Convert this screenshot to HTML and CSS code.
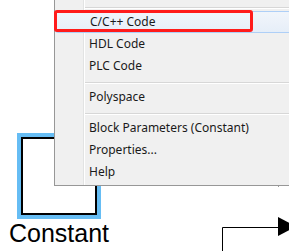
FILE: index.html
```html
<!DOCTYPE html>
<html lang="en">
<head>
  <meta charset="UTF-8">
  <title>Context menu</title>
  <link rel="stylesheet" href="styles.css">
</head>
<body>
  <div class="canvas">
    <div class="block">
      <div class="block-face"></div>
    </div>
    <div class="block-label">Constant</div>

    <svg class="wires" width="289" height="251" viewBox="0 0 289 251">
      <path d="M222.5 251 V227.5 H279" fill="none" stroke="#000" stroke-width="1"/>
      <polygon points="278,217 296,226.5 278,236" fill="#000"/>
      <rect x="278" y="185" width="1" height="2" fill="#9a9a9a"/>
    </svg>

    <div class="menu">
      <div class="sep"></div>
      <div class="item active">C/C++ Code</div>
      <div class="item">HDL Code</div>
      <div class="item">PLC Code</div>
      <div class="sep"></div>
      <div class="item">Polyspace</div>
      <div class="sep"></div>
      <div class="item">Block Parameters (Constant)</div>
      <div class="item">Properties...</div>
      <div class="item">Help</div>
    </div>

    <div class="mark"></div>
  </div>
</body>
</html>
```

FILE: styles.css
```css
body {
  margin: 0;
  background: #fff;
  font-family: "Noto Sans", "Open Sans", sans-serif;
}

.canvas {
  position: relative;
  width: 289px;
  height: 251px;
  overflow: hidden;
}

.block {
  position: absolute;
  left: 17px;
  top: 133px;
  width: 84px;
  height: 86px;
  background: #66bdf4;
  padding: 4px;
  box-sizing: border-box;
}

.block-face {
  width: 100%;
  height: 100%;
  background: #fff;
  border: 2px solid #000;
  box-sizing: border-box;
}

.block-label {
  position: absolute;
  left: 9px;
  top: 221px;
  font-family: "Liberation Sans", Arial, sans-serif;
  font-size: 25px;
  line-height: 25px;
  color: #000;
}

.wires {
  position: absolute;
  left: 0;
  top: 0;
}

.menu {
  position: absolute;
  left: 54px;
  top: 0;
  width: 260px;
  padding: 2px 0;
  background: linear-gradient(to right, #f0f0f0 0, #f0f0f0 28px, #e2e3e3 28px, #e2e3e3 29px, #fff 29px, #fff 30px, #f0f0f0 30px);
  border-left: 1px solid #979797;
  border-bottom: 1px solid #979797;
  font-size: 12px;
  color: #1a1a1a;
}

.sep {
  height: 9px;
  position: relative;
}

.sep::after {
  content: "";
  position: absolute;
  left: 30px;
  right: 0;
  top: 5px;
  height: 1px;
  background: #d7d7d7;
  border-bottom: 1px solid #fff;
}

.item {
  height: 22px;
  line-height: 22px;
  padding-left: 34px;
  white-space: nowrap;
}

.item.active {
  margin-left: 1px;
  padding-left: 33px;
  height: 20px;
  line-height: 20px;
  border: 1px solid #aecff7;
  border-right: none;
  border-radius: 2px 0 0 2px;
  background: linear-gradient(#f1f5fb, #e6eef8);
}

.mark {
  position: absolute;
  left: 54px;
  top: 10px;
  width: 199px;
  height: 22px;
  border: 3px solid #ff1b1b;
  border-radius: 3px;
  box-sizing: border-box;
}
```
